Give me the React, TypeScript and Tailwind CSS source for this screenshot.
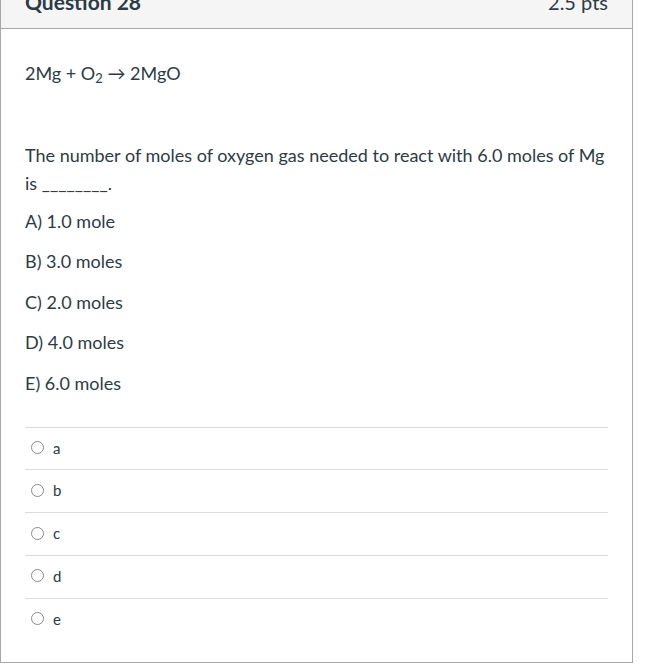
import React from "react";

const options = ["A) 1.0 mole", "B) 3.0 moles", "C) 2.0 moles", "D) 4.0 moles", "E) 6.0 moles"];
const answers = ["a", "b", "c", "d", "e"];

export default function App() {
  return (
    <div className="bg-white min-h-screen overflow-hidden" style={{ fontFamily: "Lato, 'Noto Sans', sans-serif" }}>
      <div className="w-[633px] border border-[#a8a8a8] mt-[-23px] text-[#2d3b45]">
        <div className="bg-[#f5f5f5] border-b border-[#a8a8a8] px-6 pt-3 pb-[14px] flex justify-between items-end">
          <span className="text-[21px] font-bold leading-[24px]">Question 28</span>
          <span className="text-[20px] leading-[24px]">2.5 pts</span>
        </div>
        <div className="px-6 pt-[30px] pb-[22px]">
          <p className="text-[18px] leading-[28px]">
            2Mg + O<sub className="text-[13px]">2</sub> → 2MgO
          </p>
          <p className="text-[18px] leading-[28px] mt-[54px]">
            The number of moles of oxygen gas needed to react with 6.0 moles of Mg is ________.
          </p>
          <div className="mt-[-3px]">
            {options.map((o) => (
              <p key={o} className="text-[18px] leading-[28px] mt-[12.5px]">{o}</p>
            ))}
          </div>
          <div className="mt-[30px]">
            {answers.map((a) => (
              <div key={a} className="border-t border-[#dcdcdc] pt-[9px] pb-[10.75px] flex items-center">
                <span className="ml-[6px] w-[13px] h-[13px] rounded-full border border-[#8a8a8a] inline-block"></span>
                <span className="ml-[9px] text-[15px] leading-[22px]">{a}</span>
              </div>
            ))}
          </div>
        </div>
      </div>
    </div>
  );
}
